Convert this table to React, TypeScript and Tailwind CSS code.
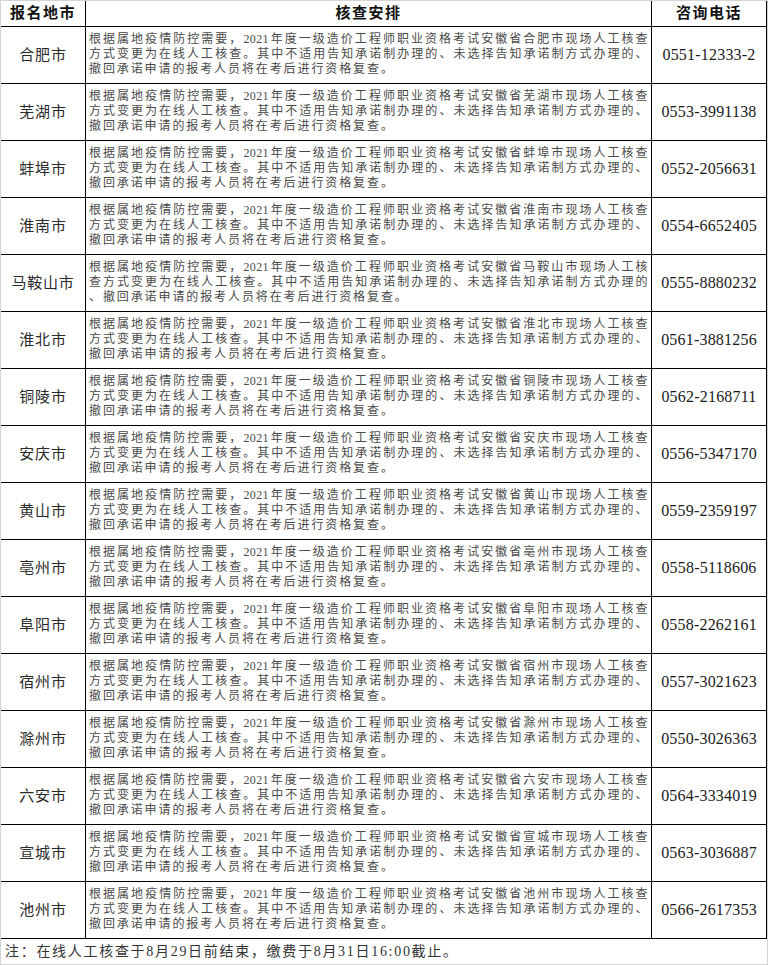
import React from 'react';

const rows: [string, string][] = [
  ['合肥市', '0551-12333-2'],
  ['芜湖市', '0553-3991138'],
  ['蚌埠市', '0552-2056631'],
  ['淮南市', '0554-6652405'],
  ['马鞍山市', '0555-8880232'],
  ['淮北市', '0561-3881256'],
  ['铜陵市', '0562-2168711'],
  ['安庆市', '0556-5347170'],
  ['黄山市', '0559-2359197'],
  ['亳州市', '0558-5118606'],
  ['阜阳市', '0558-2262161'],
  ['宿州市', '0557-3021623'],
  ['滁州市', '0550-3026363'],
  ['六安市', '0564-3334019'],
  ['宣城市', '0563-3036887'],
  ['池州市', '0566-2617353'],
];

const fontStack = "font-['Liberation_Serif','Noto_Sans_CJK_SC',serif]";

// 按原表的断行方式切成三行
function splitLines(city: string) {
  const text = `根据属地疫情防控需要，2021年度一级造价工程师职业资格考试安徽省${city}现场人工核查方式变更为在线人工核查。其中不适用告知承诺制办理的、未选择告知承诺制方式办理的、撤回承诺申请的报考人员将在考后进行资格复查。`;
  return [text.slice(0, 42), text.slice(42, 82), text.slice(82)];
}

function Row({ city, phone }: { city: string; phone: string }) {
  const [l1, l2, l3] = splitLines(city);
  return (
    <>
      <div className="h-[57px] border-r border-b border-black flex items-center justify-center text-[15px] tracking-[0.8px] text-[#2a2a2a]">
        {city}
      </div>
      <div className="h-[57px] border-r border-b border-black flex flex-col justify-center px-[3px] pb-[1px] text-[12px] leading-[15px] text-[#4a4a4a]">
        <div className="whitespace-nowrap tracking-[0.4px] text-justify [text-align-last:justify]">{l1}</div>
        <div className="whitespace-nowrap tracking-[0.4px] text-justify [text-align-last:justify]">{l2}</div>
        <div className="whitespace-nowrap tracking-[1.9px]">{l3}</div>
      </div>
      <div className="h-[57px] border-r border-b border-black flex items-center justify-center text-[16px] tracking-[0.2px] text-[#1a1a1a]">
        {phone}
      </div>
    </>
  );
}

export default function App() {
  return (
    <div className={`w-[768px] h-[965px] bg-white border border-[#d4d4d4] ${fontStack}`}>
      <div className="grid grid-cols-[85px_566px_115px]">
        <div className="h-[26px] border-r border-b border-black flex items-center justify-center text-[15px] font-bold tracking-[1.5px] text-[#111]">
          报名地市
        </div>
        <div className="h-[26px] border-r border-b border-black flex items-center justify-center text-[15px] font-bold tracking-[1.5px] text-[#111]">
          核查安排
        </div>
        <div className="h-[26px] border-r border-b border-black flex items-center justify-center text-[15px] font-bold tracking-[1.5px] text-[#111]">
          咨询电话
        </div>
        {rows.map(([city, phone]) => (
          <Row key={city} city={city} phone={phone} />
        ))}
      </div>
      <div className="h-[25px] flex items-center pl-[4px] text-[14px] tracking-[1.7px] text-[#333]">
        注：在线人工核查于8月29日前结束，缴费于8月31日16:00截止。
      </div>
    </div>
  );
}
